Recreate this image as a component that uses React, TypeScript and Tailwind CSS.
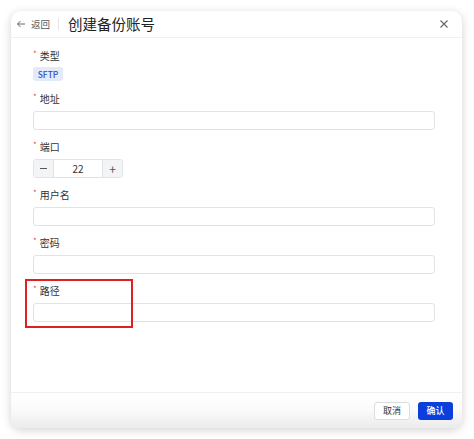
import React from "react";

const Label = ({ text }: { text: string }) => (
  <div className="flex items-center h-[14px] text-[10px] text-[#333] leading-none">
    <span className="text-[#e34d59] text-[8px] mr-[3px] relative -top-[2px]">*</span>
    <span>{text}</span>
  </div>
);

const Input = () => (
  <div className="mt-[5px] h-[19px] w-[402px] rounded-[3px] border border-[#e3e3e3] bg-white" />
);

export default function App() {
  return (
    <div
      className="w-[474px] h-[439px] bg-white pl-[11px] pt-[11px] pr-[12px] pb-[11px]"
      style={{ fontFamily: '"Noto Sans CJK SC", "Noto Sans", sans-serif' }}
    >
      <div className="w-full h-full rounded-[10px] bg-white shadow-[0_2px_10px_rgba(0,0,0,0.18)] flex flex-col overflow-hidden">
        <div className="h-[27px] flex items-center border-b border-[#f0f0f0] pl-[5px] pr-[13px] shrink-0">
          <svg width="10" height="10" viewBox="0 0 10 10" className="text-[#666]">
            <path d="M9 5H1.5M4.5 2L1.5 5l3 3" stroke="currentColor" strokeWidth="1" fill="none" />
          </svg>
          <span className="ml-[5px] text-[9.5px] text-[#555]">返回</span>
          <div className="ml-[8px] w-px h-[12px] bg-[#e6e6e6]" />
          <span className="ml-[9px] text-[14.5px] text-[#222]">创建备份账号</span>
          <div className="flex-1" />
          <svg width="10" height="10" viewBox="0 0 10 10" className="text-[#666]">
            <path d="M1.5 1.5l7 7M8.5 1.5l-7 7" stroke="currentColor" strokeWidth="1.1" />
          </svg>
        </div>
        <div className="flex-1 pl-[22px] pr-[27px] pt-[11px]">
          <Label text="类型" />
          <div className="mt-[4px] h-[14px] w-[30px] rounded-[3px] bg-[#e3ebfb] text-[#2c4fc4] text-[8.5px] font-medium flex items-center justify-center">
            SFTP
          </div>
          <div className="mt-[11px]">
            <Label text="地址" />
            <Input />
          </div>
          <div className="mt-[10px]">
            <Label text="端口" />
            <div className="mt-[5px] h-[19px] w-[90px] flex rounded-[3px] border border-[#e3e3e3] overflow-hidden">
              <div className="w-[20px] h-full bg-[#f3f4f6] flex items-center justify-center border-r border-[#e3e3e3]">
                <div className="w-[7px] h-px bg-[#555]" />
              </div>
              <div className="flex-1 flex items-center justify-center text-[10px] text-[#333]">22</div>
              <div className="w-[20px] h-full bg-[#f3f4f6] flex items-center justify-center border-l border-[#e3e3e3] text-[12px] text-[#555] leading-none">
                +
              </div>
            </div>
          </div>
          <div className="mt-[10px]">
            <Label text="用户名" />
            <Input />
          </div>
          <div className="mt-[10px]">
            <Label text="密码" />
            <Input />
          </div>
          <div className="mt-[10px] relative">
            <div className="absolute left-[-8px] top-[-5px] w-[108px] h-[49px] border-2 border-[#e02020]" />
            <Label text="路径" />
            <Input />
          </div>
        </div>
        <div className="h-[36px] shrink-0 border-t border-[#f0f0f0] bg-gradient-to-b from-white via-[#fafafa] to-[#ebebeb] flex items-center justify-end pr-[9px] gap-[8px]">
          <div className="h-[18px] w-[36px] rounded-[3px] border border-[#dcdcdc] bg-white text-[9px] text-[#333] flex items-center justify-center">
            取消
          </div>
          <div className="h-[18px] w-[35px] rounded-[3px] bg-[#0b3fdb] text-[9px] text-white font-medium flex items-center justify-center">
            确认
          </div>
        </div>
      </div>
    </div>
  );
}
